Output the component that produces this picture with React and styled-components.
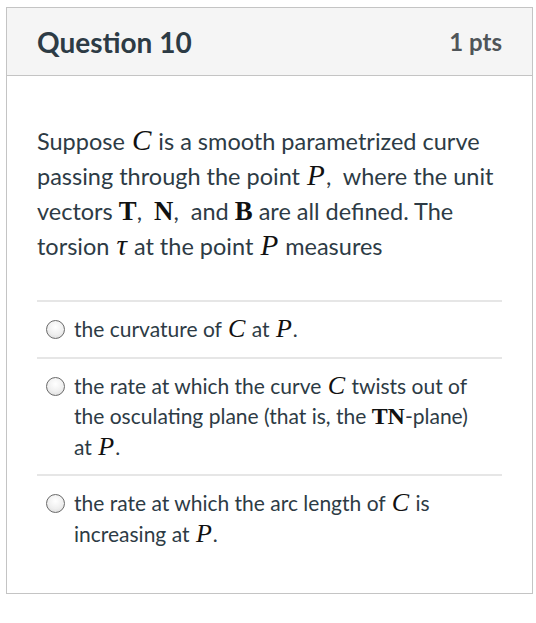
import React from 'react';
import styled, { createGlobalStyle } from 'styled-components';

const Global = createGlobalStyle`
  body {
    margin: 0;
    background: #ffffff;
    font-family: Lato, "Liberation Sans", sans-serif;
    color: #2d3b45;
  }
`;

const Card = styled.div`
  margin: 7px 0 0 6px;
  width: 525px;
  border: 1px solid #c4c4c4;
  background: #fff;
`;

const Header = styled.div`
  height: 67px;
  background: #f5f5f5;
  border-bottom: 1px solid #c4c4c4;
  padding: 0 30px;
  display: flex;
  align-items: center;
  justify-content: space-between;
`;

const Title = styled.h2`
  margin: 0;
  font-size: 28px;
  font-weight: 700;
  color: #2d3b45;
`;

const Points = styled.div`
  font-size: 24px;
  font-weight: 700;
  color: #4f5559;
`;

const Body = styled.div`
  padding: 48px 30px 32px 30px;
`;

const Prompt = styled.p`
  margin: 0 0 36px 0;
  font-size: 23.5px;
  line-height: 35px;
`;

const M = styled.span`
  font-family: "Liberation Serif", "Times New Roman", serif;
  font-style: italic;
  font-size: 1.24em;
  line-height: 0;
  color: #111;
  padding: 0 1px;
`;

const B = styled.span`
  font-family: "Liberation Serif", "Times New Roman", serif;
  font-weight: 700;
  font-size: 1.14em;
  line-height: 0;
  color: #111;
`;

const Answers = styled.ul`
  list-style: none;
  margin: 0;
  padding: 0;
`;

const Answer = styled.li`
  border-top: 2px solid #e6e6e6;
  padding: 12px 0 12px 9px;
  display: flex;
  align-items: flex-start;
  gap: 9px;
`;

const Radio = styled.span`
  flex: none;
  width: 17px;
  height: 17px;
  margin-top: 6px;
  border-radius: 50%;
  border: 1.5px solid #6a6a6a;
  background: radial-gradient(circle at 50% 35%, #ffffff 0%, #efefef 55%, #d6d6d6 100%);
`;

const AnswerText = styled.div`
  max-width: 412px;
  font-size: 21px;
  line-height: 30.5px;
`;

const App = () => {
  return (
    <>
      <Global />
      <Card>
        <Header>
          <Title>Question 10</Title>
          <Points>1 pts</Points>
        </Header>
        <Body>
          <Prompt>
            Suppose <M>C</M> is a smooth parametrized curve passing through the point <M>P</M>,&nbsp; where the
            unit vectors <B>T</B>,&nbsp; <B>N</B>,&nbsp; and <B>B</B> are all defined. The torsion <M>τ</M> at
            the point <M>P</M> measures
          </Prompt>
          <Answers>
            <Answer>
              <Radio />
              <AnswerText>
                the curvature of <M>C</M> at <M>P</M>.
              </AnswerText>
            </Answer>
            <Answer>
              <Radio />
              <AnswerText>
                the rate at which the curve <M>C</M> twists out of the osculating plane (that is, the <B>TN</B>-plane) at <M>P</M>.
              </AnswerText>
            </Answer>
            <Answer>
              <Radio />
              <AnswerText>
                the rate at which the arc length of <M>C</M> is increasing at <M>P</M>.
              </AnswerText>
            </Answer>
          </Answers>
        </Body>
      </Card>
    </>
  );
};

export default App;
